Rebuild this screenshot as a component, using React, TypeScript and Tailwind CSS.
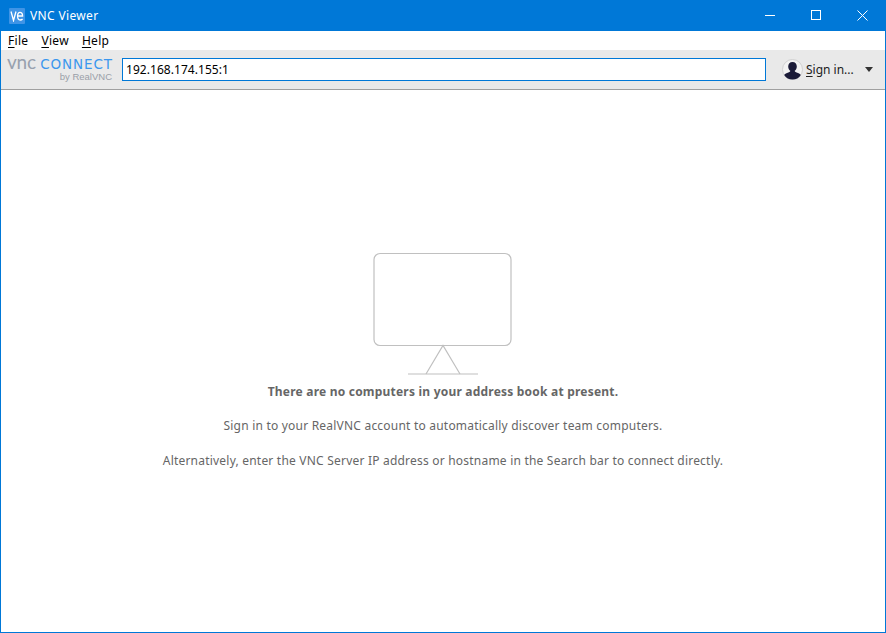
const uiFont = "font-['Noto_Sans','Open_Sans',sans-serif]";

function AppIcon() {
  return (
    <div className="w-4 h-4 bg-[#3f94e6] rounded-[1px] flex items-center justify-center">
      <svg width="14" height="12" viewBox="0 0 14 12" fill="none" stroke="#fff" strokeWidth="1.3">
        <path d="M1 1.5 L3.5 10.5 L6 1.5" />
        <path d="M7.6 6 H12.6 C12.6 3.4 11.4 2.4 10 2.4 C8.5 2.4 7.6 4 7.6 6 C7.6 8.4 8.6 10 10.2 10 C11.2 10 12 9.6 12.6 9" />
      </svg>
    </div>
  );
}

function WindowButtons() {
  return (
    <div className="flex items-center text-white h-full mr-px">
      <div className="w-[45px] flex justify-center">
        <svg width="11" height="11" viewBox="0 0 11 11" stroke="currentColor"><path d="M0 5.5 H10" /></svg>
      </div>
      <div className="w-[46px] flex justify-center">
        <svg width="11" height="11" viewBox="0 0 11 11" fill="none" stroke="currentColor"><rect x="0.5" y="0.5" width="9" height="9" /></svg>
      </div>
      <div className="w-[46px] flex justify-center">
        <svg width="11" height="11" viewBox="0 0 11 11" stroke="currentColor"><path d="M0.5 0.5 L10.5 10.5 M10.5 0.5 L0.5 10.5" /></svg>
      </div>
    </div>
  );
}

function MenuItem({ first, rest }: { first: string; rest: string }) {
  return (
    <span>
      <span className="underline underline-offset-2">{first}</span>
      {rest}
    </span>
  );
}

function Logo() {
  return (
    <div className="w-[105px] flex flex-col items-end select-none">
      <div className="w-full flex items-baseline justify-between h-[15px] leading-[15px]">
        <span className="text-[#98a1ae] text-[19px] font-['Lato',sans-serif] tracking-[-0.2px]">vnc</span>
        <span className="text-[#3b97ee] text-[13.5px] font-['DejaVu_Sans',sans-serif] tracking-[0.9px] mr-[-1px]">CONNECT</span>
      </div>
      <div className="text-[9.5px] leading-[12px] mt-[2px] text-[#9a9fa8] font-['Liberation_Sans',sans-serif]">by RealVNC</div>
    </div>
  );
}

function Avatar() {
  return (
    <svg width="21" height="21" viewBox="0 0 21 21">
      <circle cx="10.5" cy="10.5" r="10" fill="#f2f2f2" stroke="#c9c9c9" strokeWidth="0.8" />
      <path d="M10.5 3 C7.8 3 6.2 5 6.2 7.4 C6.2 9.6 7.3 11 8.3 11.8 C8.3 12.8 7 13.2 5 14 C3.4 14.6 2.6 15.4 2.2 16 C4 19 7 20.5 10.5 20.5 C14 20.5 17 19 18.8 16 C18.4 15.4 17.6 14.6 16 14 C14 13.2 12.7 12.8 12.7 11.8 C13.7 11 14.8 9.6 14.8 7.4 C14.8 5 13.2 3 10.5 3 Z" fill="#1b1b38" />
    </svg>
  );
}

function Monitor() {
  return (
    <svg width="140" height="124" viewBox="0 0 140 124" fill="none" stroke="#c0c0c0" strokeWidth="1.2">
      <rect x="1" y="1.5" width="137" height="92" rx="6" />
      <path d="M53 122 L70 93.5 L87 122" />
      <path d="M35 122 H105" />
    </svg>
  );
}

export default function App() {
  return (
    <div className={`w-[886px] h-[633px] overflow-hidden flex flex-col bg-white border border-[#0078d7] border-t-0 ${uiFont}`}>
      <div className="h-[31px] shrink-0 bg-[#0078d7] flex items-center justify-between text-white -mx-px">
        <div className="flex items-center pl-[9px] gap-[5px]">
          <AppIcon />
          <span className="text-[12px] leading-none tracking-[0.35px]">VNC Viewer</span>
        </div>
        <WindowButtons />
      </div>

      <div className="h-[19px] shrink-0 bg-white flex items-center gap-[13px] pl-[7px] text-[12px] text-black tracking-[0.3px]">
        <MenuItem first="F" rest="ile" />
        <MenuItem first="V" rest="iew" />
        <MenuItem first="H" rest="elp" />
      </div>

      <div className="h-[40px] shrink-0 bg-[#e9e9e9] border-b border-[#a0a0a0] flex items-center pl-[6px]">
        <div className="pb-[3px]">
          <Logo />
        </div>
        <input
          readOnly
          value="192.168.174.155:1"
          className="ml-[10px] w-[644px] h-[23px] bg-white border border-[#0078d7] px-[3px] text-[12px] text-black outline-none tracking-[0.05px]"
        />
        <div className="ml-[16px] flex items-center">
          <Avatar />
          <span className="ml-[3px] text-[12px] text-[#222]">
            <span className="underline underline-offset-2">S</span>ign in...
          </span>
          <svg className="ml-[11px]" width="8" height="5" viewBox="0 0 8 5"><path d="M0 0 H8 L4 5 Z" fill="#333" /></svg>
        </div>
      </div>

      <div className="flex-1 flex flex-col items-center pt-[162px] text-[12px] text-[#666] tracking-[0.21px]">
        <Monitor />
        <p className="mt-[8px] font-bold leading-[16px]">There are no computers in your address book at present.</p>
        <p className="mt-[18px] leading-[16px]">Sign in to your RealVNC account to automatically discover team computers.</p>
        <p className="mt-[19px] leading-[16px]">Alternatively, enter the VNC Server IP address or hostname in the Search bar to connect directly.</p>
      </div>
    </div>
  );
}
